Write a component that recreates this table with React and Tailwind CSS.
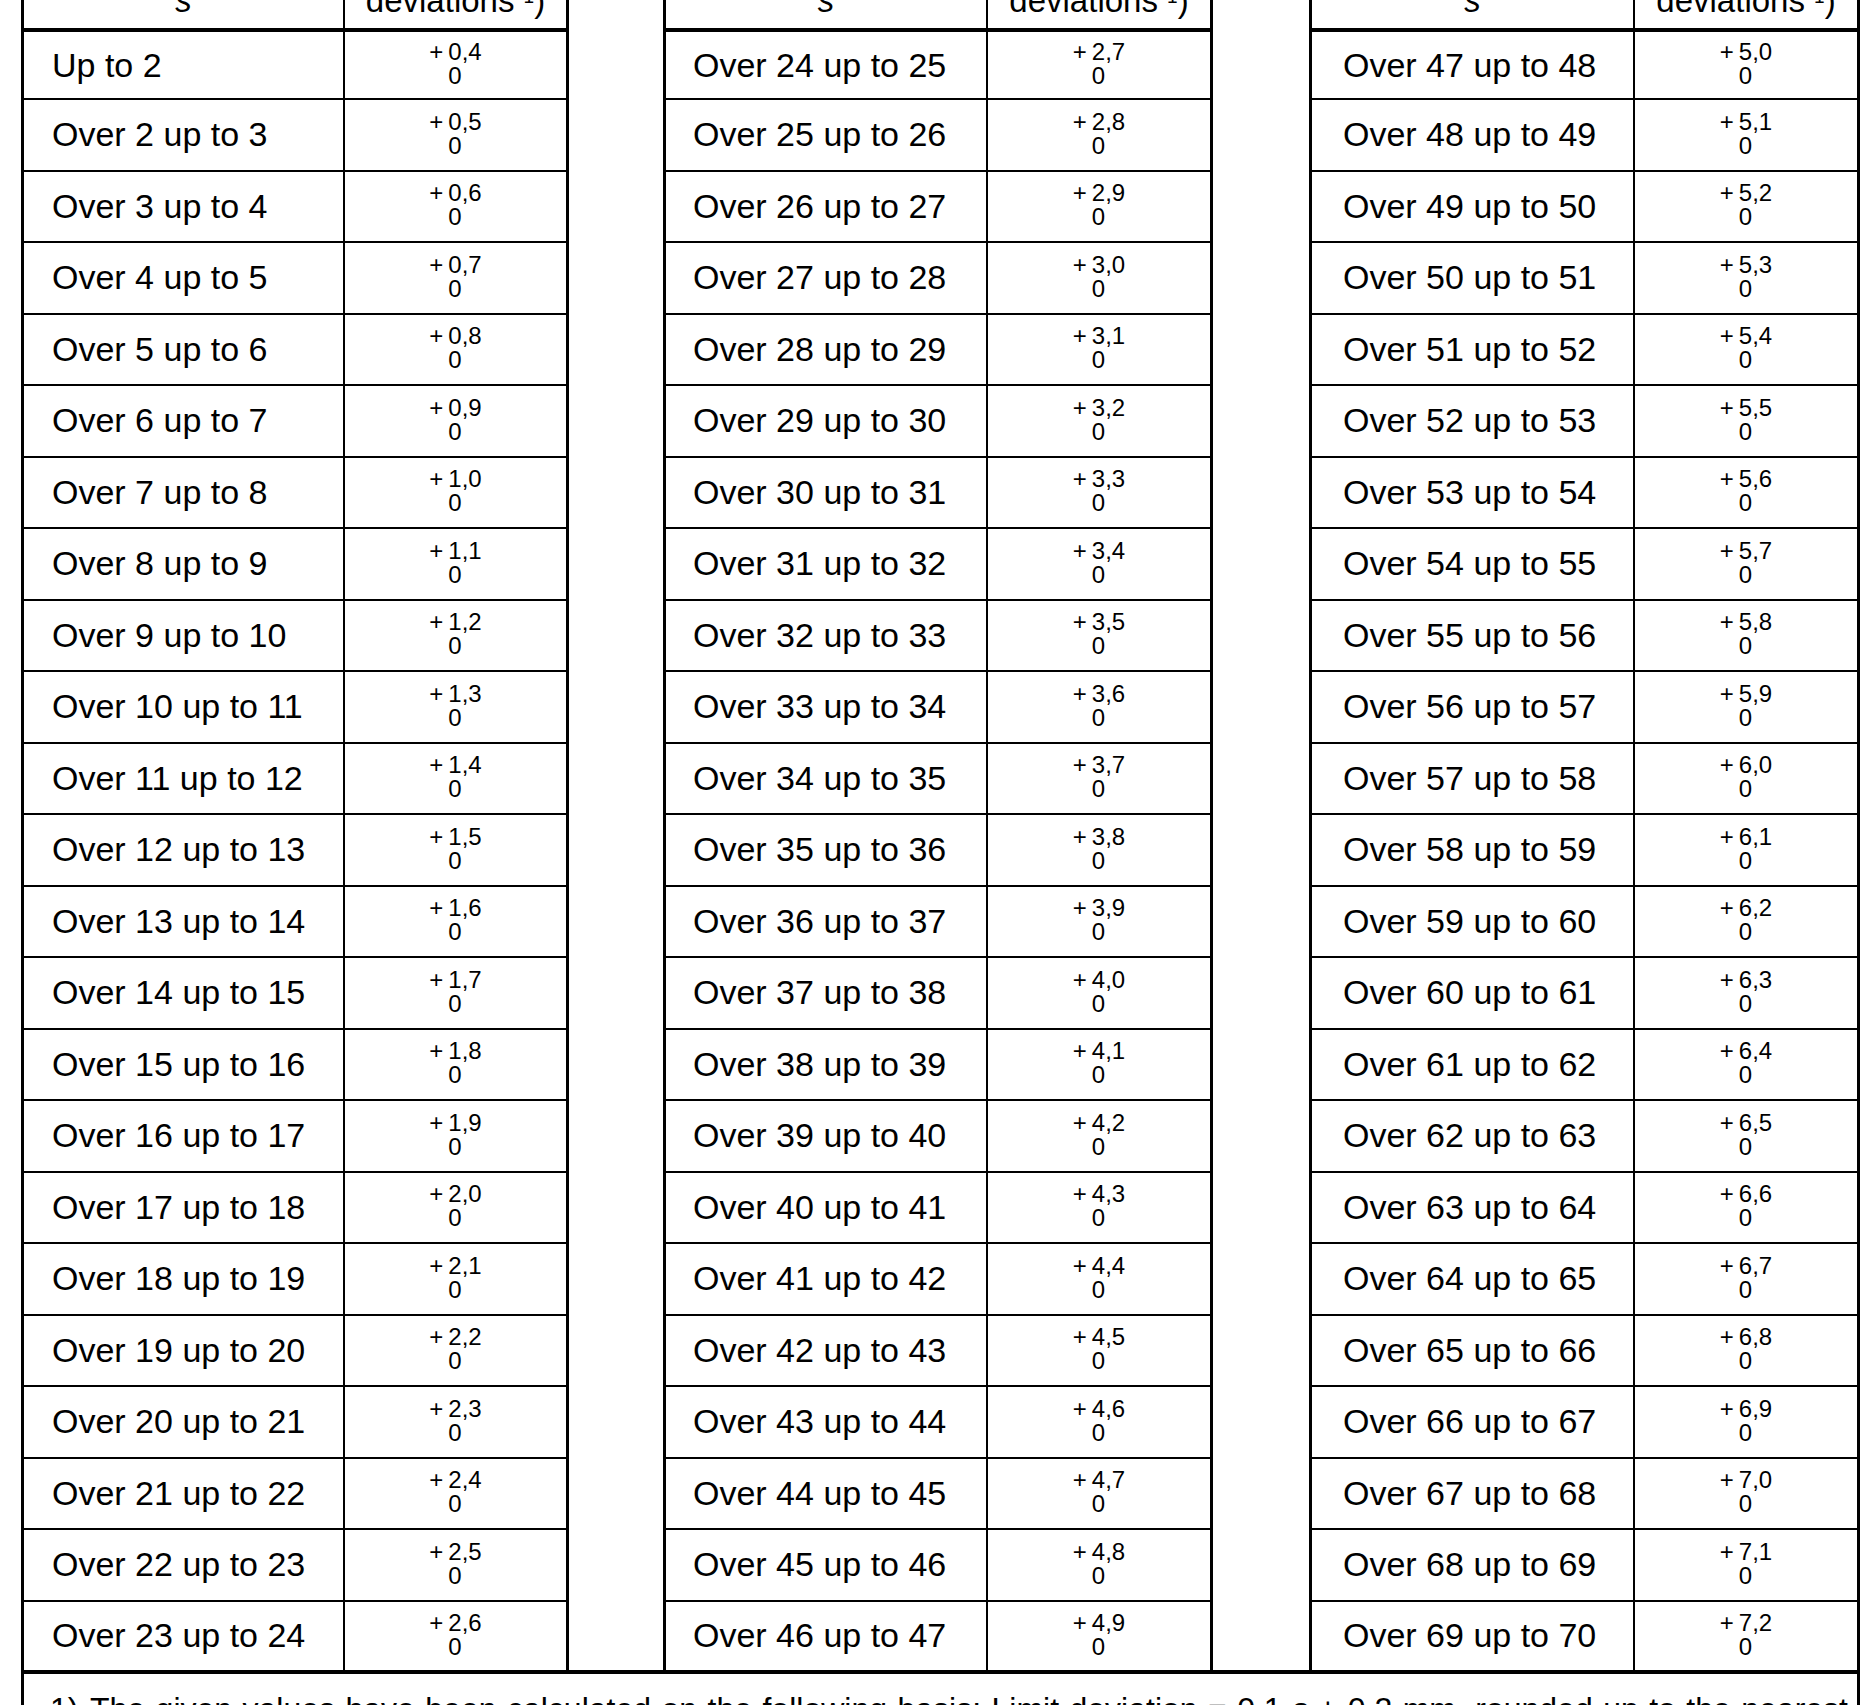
// Tolerance table: nominal thickness s vs. limit deviations, three side-by-side blocks

import React from 'react';

const fmt = (n) => n.toFixed(1).replace('.', ',');

// row data: label + upper limit (the deviation is 0,1 * upper + 0,2)
const buildRows = (from, to) => {
  const rows = [];
  for (let n = from; n <= to; n++) {
    rows.push({
      label: n === 2 ? 'Up to 2' : `Over ${n - 1} up to ${n}`,
      value: fmt(0.1 * n + 0.2),
    });
  }
  return rows;
};

const TABLES = [
  {
    rows: buildRows(2, 24),
    box: 'w-[545px] border-r-[3px]',
    col1: 'w-[321px] pl-[28px]',
  },
  {
    rows: buildRows(25, 47),
    box: 'w-[550px] border-x-[3px]',
    col1: 'w-[322px] pl-[27px]',
  },
  {
    rows: buildRows(48, 70),
    box: 'w-[548px] border-l-[3px]',
    col1: 'w-[323px] pl-[31px]',
  },
];

// +x,x over 0, stacked like a tolerance
function Deviation({ value }) {
  return (
    <div className="flex items-start text-[24px] leading-[24px] mb-[2px]">
      <span className="mr-[5px]">+</span>
      <div className="flex flex-col">
        <span>{value}</span>
        <span>0</span>
      </div>
    </div>
  );
}

function Row({ row, index, col1 }) {
  const height =
    index === 0 ? 'h-[68px]' : index === 22 ? 'h-[68.5px]' : 'h-[71.5px]';
  return (
    <div className={`flex ${height} ${index === 22 ? '' : 'border-b-2 border-black'}`}>
      <div className={`${col1} flex items-center border-r-2 border-black text-[34px] whitespace-nowrap`}>
        {row.label}
      </div>
      <div className="flex-1 flex items-center justify-center">
        <Deviation value={row.value} />
      </div>
    </div>
  );
}

function Block({ table }) {
  return (
    <div className={`${table.box} border-black flex flex-col shrink-0`}>
      {/* header (mostly above the visible area) */}
      <div className="flex h-[114px] border-b-4 border-black text-[33px] leading-[38px]">
        <div className={`${table.col1} !pl-0 flex flex-col items-center justify-end pb-2 border-r-2 border-black`}>
          <span>Nominal thickness</span>
          <span className="italic">s</span>
        </div>
        <div className="flex-1 flex flex-col items-center justify-end pb-2">
          <span>Limit</span>
          <span>
            deviations <sup className="text-[19px]">1</sup>)
          </span>
        </div>
      </div>

      {table.rows.map((row, i) => (
        <Row key={row.label} row={row} index={i} col1={table.col1} />
      ))}
    </div>
  );
}

export default function App() {
  return (
    <div className="bg-white min-h-screen overflow-hidden text-black font-['Liberation_Sans',Arial,Helvetica,sans-serif]">
      <div className="-mt-[82px] ml-[21px] w-[1839px] border-x-[3px] border-black">
        <div className="flex gap-[96px]">
          <Block table={TABLES[0]} />
          <div className="flex -ml-[2px]">
            <Block table={TABLES[1]} />
          </div>
          <Block table={TABLES[2]} />
        </div>

        {/* Footnote */}
        <div className="border-t-4 border-black flex pt-4 pb-6 text-[32px] leading-[38px]">
          <span className="w-[66px] shrink-0 pl-[26px]">1)</span>
          <p className="flex-1 pr-[9px] text-justify">
            The given values have been calculated on the following basis: Limit deviation = 0,1{' '}
            <span className="italic">s</span> + 0,2 mm, rounded up to the nearest 0,1 mm.
          </p>
        </div>
      </div>
    </div>
  );
}
